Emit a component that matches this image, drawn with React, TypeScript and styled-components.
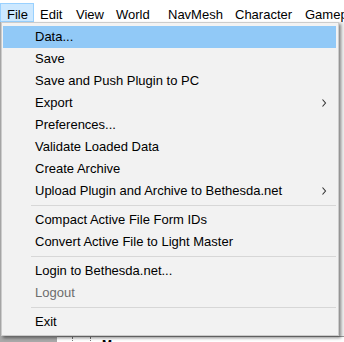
import React from "react";
import styled, { createGlobalStyle } from "styled-components";

const GlobalStyle = createGlobalStyle`
  html, body { margin: 0; padding: 0; background: #f0f0f0; }
  body { font-family: "Liberation Sans", Arial, sans-serif; font-size: 13px; color: #000; }
  * { box-sizing: border-box; }
`;

const Window = styled.div`
  position: relative;
  width: 344px;
  height: 342px;
  overflow: hidden;
  background: #f0f0f0;
`;

const MenuBar = styled.div`
  display: flex;
  align-items: flex-end;
  height: 22px;
  background: #fff;
  white-space: nowrap;
`;

const MenuTitle = styled.div<{ $w?: number; $open?: boolean }>`
  flex: none;
  width: ${(p) => (p.$w ? `${p.$w}px` : "auto")};
  height: 19px;
  padding: 2px 0 0 6px;
  line-height: 17px;
  border: 1px solid ${(p) => (p.$open ? "#99d1ff" : "transparent")};
  border-left-width: ${(p) => (p.$open ? 1 : 0)}px;
  background: ${(p) => (p.$open ? "#cce8ff" : "transparent")};
`;

const Workspace = styled.div`
  display: grid;
  grid-template-columns: 57px 1fr;
  height: 330px;
`;

const LeftPanel = styled.div`
  background: #a9a9a9;
`;

const MainPane = styled.div`
  display: flex;
  flex-direction: column;
  justify-content: flex-end;
  background: #efefef;
`;

const LogHeader = styled.div`
  display: grid;
  grid-template-columns: 16px 18px 1fr;
  height: 16px;
  background: #fff;
  border-top: 1px solid #9a9a9a;
`;

const LogCell = styled.div<{ $last?: boolean }>`
  border-right: ${(p) => (p.$last ? "none" : "1px dotted #777")};
  padding-left: ${(p) => (p.$last ? "11px" : "0")};
  font-weight: bold;
  font-size: 12px;
  line-height: 16px;
`;

const DropMenu = styled.div`
  position: absolute;
  left: 1px;
  top: 22px;
  width: 338px;
  padding: 3px 2px 2px 1px;
  background: #f2f2f2;
  border: 1px solid #cccccc;
  box-shadow: 2px 2px 3px rgba(0, 0, 0, 0.45);
`;

const Item = styled.div<{ $active?: boolean; $disabled?: boolean }>`
  display: flex;
  align-items: center;
  justify-content: space-between;
  height: 22px;
  padding: 0 9px 1px 32px;
  line-height: 21px;
  white-space: nowrap;
  background: ${(p) => (p.$active ? "#91c9f7" : "transparent")};
  color: ${(p) => (p.$disabled ? "#6d6d6d" : "#000")};
`;

const Separator = styled.div`
  height: 7px;
  padding-top: 3px;
  margin-left: 28px;
  &::after {
    content: "";
    display: block;
    height: 1px;
    background: #d7d7d7;
  }
`;

const Chevron = () => (
  <svg width="6" height="8" viewBox="0 0 6 8" aria-hidden>
    <polyline points="1.5,0.5 4.5,4 1.5,7.5" fill="none" stroke="#333" strokeWidth="1.1" />
  </svg>
);

type Entry =
  | { kind: "item"; label: string; sub?: boolean; active?: boolean; disabled?: boolean }
  | { kind: "sep" };

const entries: Entry[] = [
  { kind: "item", label: "Data...", active: true },
  { kind: "item", label: "Save" },
  { kind: "item", label: "Save and Push Plugin to PC" },
  { kind: "item", label: "Export", sub: true },
  { kind: "item", label: "Preferences..." },
  { kind: "item", label: "Validate Loaded Data" },
  { kind: "item", label: "Create Archive" },
  { kind: "item", label: "Upload Plugin and Archive to Bethesda.net", sub: true },
  { kind: "sep" },
  { kind: "item", label: "Compact Active File Form IDs" },
  { kind: "item", label: "Convert Active File to Light Master" },
  { kind: "sep" },
  { kind: "item", label: "Login to Bethesda.net..." },
  { kind: "item", label: "Logout", disabled: true },
  { kind: "sep" },
  { kind: "item", label: "Exit" },
];

const titles: { label: string; w?: number }[] = [
  { label: "File", w: 34 },
  { label: "Edit", w: 36 },
  { label: "View", w: 40 },
  { label: "World", w: 52 },
  { label: "NavMesh", w: 67 },
  { label: "Character", w: 70 },
  { label: "Gameplay" },
];

export default function App() {
  return (
    <Window>
      <GlobalStyle />
      <MenuBar>
        {titles.map((t, i) => (
          <MenuTitle key={t.label} $w={t.w} $open={i === 0}>
            {t.label}
          </MenuTitle>
        ))}
      </MenuBar>
      <Workspace>
        <LeftPanel />
        <MainPane>
          <LogHeader>
            <LogCell />
            <LogCell />
            <LogCell $last>Message</LogCell>
          </LogHeader>
        </MainPane>
      </Workspace>
      <DropMenu>
        {entries.map((e, i) =>
          e.kind === "sep" ? (
            <Separator key={i} />
          ) : (
            <Item key={i} $active={e.active} $disabled={e.disabled}>
              <span>{e.label}</span>
              {e.sub && <Chevron />}
            </Item>
          )
        )}
      </DropMenu>
    </Window>
  );
}
